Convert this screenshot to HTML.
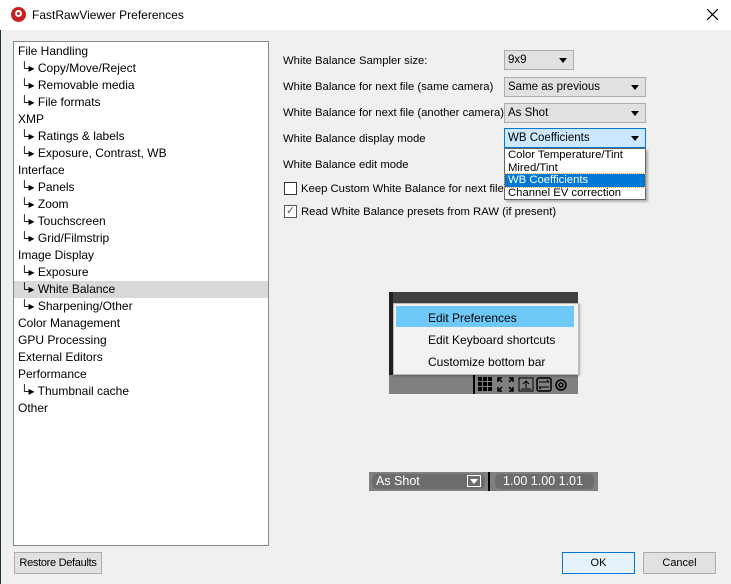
<!DOCTYPE html>
<html><head><meta charset="utf-8"><style>
*{margin:0;padding:0;box-sizing:border-box}
body{width:731px;height:584px;background:#f0f0f0;font-family:"Liberation Sans",sans-serif;font-size:11.5px;color:#000;position:relative;overflow:hidden}
.a{position:absolute;white-space:nowrap}
.title{left:0;top:0;width:731px;height:30px;background:#fff}
.tree{left:13px;top:41px;width:256px;height:505px;background:#fff;border:1px solid #828790}
.it{position:absolute;left:4px;height:17px;line-height:17px;white-space:nowrap;font-size:12px}
.sub{left:6px}
.lbl{left:283px;white-space:nowrap;line-height:14px;font-size:11.3px}
.cb{background:#e1e1e1;border:1px solid #adadad;height:20px;line-height:18px;padding-left:3px;z-index:2}
.arr{position:absolute;right:6px;top:7px;width:0;height:0;border-left:4px solid transparent;border-right:4px solid transparent;border-top:5px solid #000}
.btn{background:#e1e1e1;border:1px solid #adadad;height:22px;line-height:20px;text-align:center;font-size:11px}
.chk{width:13px;height:13px;border:1px solid #333;background:#fff}
</style></head><body>
<div class="a" style="left:0;top:0;width:1px;height:584px;background:#1e3a2a"></div>
<div class="a title"></div>
<div class="a" style="left:11px;top:7px;width:15px;height:15px;border-radius:50%;background:#c8201f"></div>
<div class="a" style="left:15px;top:10px;width:7px;height:7px;border-radius:50%;border:2px solid #fff"></div>
<div class="a" style="left:32px;top:8px;font-size:12px">FastRawViewer Preferences</div>
<svg class="a" style="left:707px;top:9px" width="11" height="11"><path d="M0 0L11 11M11 0L0 11" stroke="#000" stroke-width="1.2"/></svg>

<div class="a tree">
<div class="a" style="left:0;top:239px;width:254px;height:17px;background:#d9d9d9"></div>
<div class="it" style="top:1px">File Handling</div>
<div class="it sub" style="top:18px">└▸ Copy/Move/Reject</div>
<div class="it sub" style="top:35px">└▸ Removable media</div>
<div class="it sub" style="top:52px">└▸ File formats</div>
<div class="it" style="top:69px">XMP</div>
<div class="it sub" style="top:86px">└▸ Ratings &amp; labels</div>
<div class="it sub" style="top:103px">└▸ Exposure, Contrast, WB</div>
<div class="it" style="top:120px">Interface</div>
<div class="it sub" style="top:137px">└▸ Panels</div>
<div class="it sub" style="top:154px">└▸ Zoom</div>
<div class="it sub" style="top:171px">└▸ Touchscreen</div>
<div class="it sub" style="top:188px">└▸ Grid/Filmstrip</div>
<div class="it" style="top:205px">Image Display</div>
<div class="it sub" style="top:222px">└▸ Exposure</div>
<div class="it sub" style="top:239px">└▸ White Balance</div>
<div class="it sub" style="top:256px">└▸ Sharpening/Other</div>
<div class="it" style="top:273px">Color Management</div>
<div class="it" style="top:290px">GPU Processing</div>
<div class="it" style="top:307px">External Editors</div>
<div class="it" style="top:324px">Performance</div>
<div class="it sub" style="top:341px">└▸ Thumbnail cache</div>
<div class="it" style="top:358px">Other</div>
</div>

<div class="a lbl" style="top:54px">White Balance Sampler size:</div>
<div class="a lbl" style="top:80px">White Balance for next file (same camera)</div>
<div class="a lbl" style="top:106px">White Balance for next file (another camera)</div>
<div class="a lbl" style="top:132px">White Balance display mode</div>
<div class="a lbl" style="top:158px">White Balance edit mode</div>

<div class="a cb" style="left:504px;top:50px;width:70px">9x9<span class="arr"></span></div>
<div class="a cb" style="left:504px;top:77px;width:142px">Same as previous<span class="arr"></span></div>
<div class="a cb" style="left:504px;top:103px;width:142px">As Shot<span class="arr"></span></div>
<div class="a cb" style="left:504px;top:128px;width:142px;background:#cce8ff;border-color:#0078d7">WB Coefficients<span class="arr"></span></div>

<div class="a chk" style="left:284px;top:182px"></div>
<div class="a lbl" style="left:301px;top:182px">Keep Custom White Balance for next file (s</div>
<div class="a chk" style="left:284px;top:205px;border-color:#555;color:#555;font-size:11px;line-height:11px;text-align:center">✓</div>
<div class="a lbl" style="left:301px;top:205px">Read White Balance presets from RAW (if present)</div>

<div class="a" style="left:504px;top:148px;width:142px;height:52px;background:#fff;border:1px solid #646464;box-shadow:2px 2px 2px rgba(0,0,0,.25);line-height:12.5px;z-index:3;font-size:11.3px">
<div style="padding-left:3px">Color Temperature/Tint</div>
<div style="padding-left:3px">Mired/Tint</div>
<div style="padding-left:3px;background:#0078d7;color:#fff;outline:1px dotted #f0a030">WB Coefficients</div>
<div style="padding-left:3px">Channel EV correction</div>
</div>

<div class="a" style="left:389px;top:292px;width:189px;height:102px;background:#808080"></div>
<div class="a" style="left:389px;top:292px;width:189px;height:12px;background:#404040"></div>
<div class="a" style="left:389px;top:292px;width:4px;height:83px;background:#202020"></div>
<div class="a" style="left:473px;top:374px;width:2px;height:20px;background:#000"></div>
<svg class="a" style="left:477px;top:376px" width="101" height="17">
<g fill="#000"><rect x="1" y="1" width="4" height="4"/><rect x="6" y="1" width="4" height="4"/><rect x="11" y="1" width="4" height="4"/><rect x="1" y="6" width="4" height="4"/><rect x="6" y="6" width="4" height="4"/><rect x="11" y="6" width="4" height="4"/><rect x="1" y="11" width="4" height="4"/><rect x="6" y="11" width="4" height="4"/><rect x="11" y="11" width="4" height="4"/></g>
<g stroke="#000" stroke-width="1.5" fill="none"><path d="M21 6V2H25M21 2L25 6M36 6V2H32M36 2L32 6M21 11V15H25M21 15L25 11M36 11V15H32M36 15L32 11"/>
<rect x="42" y="2" width="14" height="13" stroke-width="1"/><path d="M49 12V5M46 8L49 5L52 8M44 13H54" stroke-width="1"/>
<rect x="60" y="2" width="14" height="13" rx="2"/><path d="M62 6H72M70 4L72 6M72 11H62M64 13L62 11" stroke-width="1"/>
<circle cx="84" cy="9" r="5"/><circle cx="84" cy="9" r="2"/></g></svg>
<div class="a" style="left:393px;top:303px;width:186px;height:72px;background:#f2f2f2;border:1px solid #bbb;box-shadow:1px 1px 2px rgba(0,0,0,.3)"></div>
<div class="a" style="left:396px;top:306px;width:178px;height:21px;background:#6ec9f8"></div>
<div class="a" style="left:428px;top:311px;font-size:12px">Edit Preferences</div>
<div class="a" style="left:428px;top:333px;font-size:12px">Edit Keyboard shortcuts</div>
<div class="a" style="left:428px;top:355px;font-size:12px">Customize bottom bar</div>

<div class="a" style="left:369px;top:472px;width:229px;height:19px;background:#808080"></div>
<div class="a" style="left:372px;top:474px;width:113px;height:15px;background:#6c6c6c;border-radius:5px"></div>
<div class="a" style="left:376px;top:474px;color:#fff;font-size:12.5px">As Shot</div>
<div class="a" style="left:467px;top:475px;width:14px;height:12px;border:1px solid #fff;background:#6c6c6c"></div>
<div class="a" style="left:470px;top:479px;border-left:4px solid transparent;border-right:4px solid transparent;border-top:5px solid #fff"></div>
<div class="a" style="left:488px;top:472px;width:2px;height:19px;background:#000"></div>
<div class="a" style="left:495px;top:474px;width:99px;height:15px;background:#6c6c6c;border-radius:5px"></div>
<div class="a" style="left:503px;top:474px;color:#fff;font-size:12.5px">1.00 1.00 1.01</div>

<div class="a btn" style="left:14px;top:552px;width:88px;letter-spacing:-0.3px">Restore Defaults</div>
<div class="a btn" style="left:562px;top:552px;width:73px;background:#e5f1fb;border-color:#0078d7">OK</div>
<div class="a btn" style="left:643px;top:552px;width:73px">Cancel</div>
</body></html>
